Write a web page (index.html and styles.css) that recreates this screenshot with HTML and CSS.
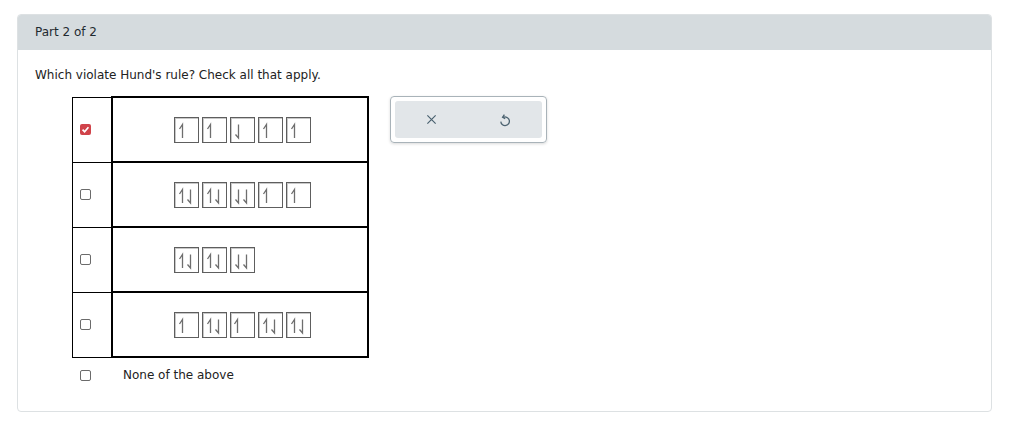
FILE: index.html
```html
<!DOCTYPE html>
<html>
<head lang="en">
    <meta charset="UTF-8">
    <title>Part 2 of 2</title>
    <link rel="stylesheet" href="styles.css">
</head>
<body>
    <div class="card">
        <div class="card-head">Part 2 of 2</div>
        <div class="card-body">
            <p class="question">Which violate Hund's rule? Check all that apply.</p>
            <div class="answer">
                <div class="choices">
                    <table class="grid">
                        <tr>
                            <td class="pick"><span class="box checked"><svg viewBox="0 0 12 12"><path d="M2.8 6.2l2.2 2.3 4.2-5"/></svg></span></td>
                            <td class="orbitals">
                                <span class="orb"><svg viewBox="0 0 23 24"><path d="M7.5 20V6.5l-3 4.5"/></svg></span>
                                <span class="orb"><svg viewBox="0 0 23 24"><path d="M7.5 20V6.5l-3 4.5"/></svg></span>
                                <span class="orb"><svg viewBox="0 0 23 24"><path d="M7.5 6.5V20l-3-3.5"/></svg></span>
                                <span class="orb"><svg viewBox="0 0 23 24"><path d="M7.5 20V6.5l-3 4.5"/></svg></span>
                                <span class="orb"><svg viewBox="0 0 23 24"><path d="M7.5 20V6.5l-3 4.5"/></svg></span>
                            </td>
                        </tr>
                        <tr>
                            <td class="pick"><span class="box"></span></td>
                            <td class="orbitals">
                                <span class="orb"><svg viewBox="0 0 23 24"><path d="M7.5 20V6.5l-3 4.5M15.5 6.5V20l-3-3.5"/></svg></span>
                                <span class="orb"><svg viewBox="0 0 23 24"><path d="M7.5 20V6.5l-3 4.5M15.5 6.5V20l-3-3.5"/></svg></span>
                                <span class="orb"><svg viewBox="0 0 23 24"><path d="M7.5 6.5V20l-3-3.5M15.5 6.5V20l-3-3.5"/></svg></span>
                                <span class="orb"><svg viewBox="0 0 23 24"><path d="M7.5 20V6.5l-3 4.5"/></svg></span>
                                <span class="orb"><svg viewBox="0 0 23 24"><path d="M7.5 20V6.5l-3 4.5"/></svg></span>
                            </td>
                        </tr>
                        <tr>
                            <td class="pick"><span class="box"></span></td>
                            <td class="orbitals">
                                <span class="orb"><svg viewBox="0 0 23 24"><path d="M7.5 20V6.5l-3 4.5M15.5 6.5V20l-3-3.5"/></svg></span>
                                <span class="orb"><svg viewBox="0 0 23 24"><path d="M7.5 20V6.5l-3 4.5M15.5 6.5V20l-3-3.5"/></svg></span>
                                <span class="orb"><svg viewBox="0 0 23 24"><path d="M7.5 6.5V20l-3-3.5M15.5 6.5V20l-3-3.5"/></svg></span>
                            </td>
                        </tr>
                        <tr>
                            <td class="pick"><span class="box"></span></td>
                            <td class="orbitals">
                                <span class="orb"><svg viewBox="0 0 23 24"><path d="M7.5 20V6.5l-3 4.5"/></svg></span>
                                <span class="orb"><svg viewBox="0 0 23 24"><path d="M7.5 20V6.5l-3 4.5M15.5 6.5V20l-3-3.5"/></svg></span>
                                <span class="orb"><svg viewBox="0 0 23 24"><path d="M6.5 20V6.5l-3 4.5"/></svg></span>
                                <span class="orb"><svg viewBox="0 0 23 24"><path d="M7.5 20V6.5l-3 4.5M15.5 6.5V20l-3-3.5"/></svg></span>
                                <span class="orb"><svg viewBox="0 0 23 24"><path d="M7.5 20V6.5l-3 4.5M15.5 6.5V20l-3-3.5"/></svg></span>
                            </td>
                        </tr>
                    </table>
                    <div class="none-row">
                        <span class="pick-plain"><span class="box"></span></span>
                        <span class="none-label">None of the above</span>
                    </div>
                </div>

                <div class="tools">
                    <div class="tools-inner">
                        <span class="tool"><svg class="icon-x" viewBox="0 0 12 12"><path d="M1.5 1.5l9 9M10.5 1.5l-9 9"/></svg></span>
                        <span class="tool"><svg class="icon-undo" viewBox="0 0 12 14"><path d="M4.2 4.4A4.3 4.3 0 1 1 1.8 8.6"/><path d="M5.4 1.6L3.6 4.3l2.6 1.3"/></svg></span>
                    </div>
                </div>
            </div>
        </div>
    </div>
</body>
</html>
```

FILE: styles.css
```css
body {
    margin: 0;
    background-color: #ffffff;
    font-family: "DejaVu Sans", Verdana, sans-serif;
    color: #222222;
}
.card {
    margin: 14px 32px 0 17px;
    height: 398px;
    box-sizing: border-box;
    border: 1px solid #dde1e3;
    border-radius: 4px;
    overflow: hidden;
}
.card-head {
    height: 35px;
    background-color: #d5dbde;
    padding-left: 17px;
    font-size: 12px;
    line-height: 35px;
    color: #1f2a30;
}
.card-body {
    padding: 0 17px;
}
.question {
    margin: 0;
    padding-top: 17px;
    height: 29px;
    font-size: 12px;
    line-height: 16px;
}
.answer {
    display: flex;
    align-items: flex-start;
    gap: 21px;
    padding-left: 37px;
}

/* table of orbital diagrams */
.grid {
    border-collapse: collapse;
    border: 1px solid #000000;
}
.grid td {
    height: 63px;
    padding: 0;
}
.pick {
    width: 31px;
    padding-left: 7px !important;
    text-align: left;
    font-size: 0;
    border-top: 1px solid #000000;
    border-bottom: 1px solid #000000;
    border-right: 1px solid #000000;
}
.orbitals {
    width: 193px;
    padding-left: 61px !important;
    border: 2px solid #000000;
    white-space: nowrap;
    font-size: 0;
}
.orb {
    display: inline-block;
    width: 23px;
    height: 24px;
    margin-right: 3px;
    border: 1px solid #5e5e5e;
    box-shadow: inset 1px 1px 0 #c8c8c8;
    vertical-align: middle;
}
.orb svg {
    display: block;
    width: 23px;
    height: 24px;
    fill: none;
    stroke: #6e6e6e;
    stroke-width: 1.3;
}

/* check boxes */
.box {
    display: inline-block;
    width: 9px;
    height: 9px;
    border: 1px solid #6b6b6b;
    border-radius: 2px;
    vertical-align: middle;
    background-color: #ffffff;
}
.box.checked {
    width: 11px;
    height: 11px;
    border: 0;
    background-color: #d0434a;
}
.box svg {
    display: block;
    width: 11px;
    height: 11px;
    fill: none;
    stroke: #ffffff;
    stroke-width: 1.8;
}
.none-row {
    display: flex;
    align-items: center;
    height: 34px;
}
.pick-plain {
    width: 43px;
    padding-left: 8px;
    box-sizing: border-box;
    font-size: 0;
}
.none-label {
    margin-left: 8px;
    font-size: 12px;
    color: #222222;
}

/* reset / undo panel */
.tools {
    width: 147px;
    padding: 4px;
    border: 1px solid #a9b3b9;
    border-radius: 4px;
    box-shadow: 0 1px 3px rgba(0, 0, 0, 0.15);
}
.tools-inner {
    display: flex;
    height: 37px;
    background-color: #e2e6e9;
    border-radius: 3px;
}
.tool {
    flex: 1;
    display: flex;
    align-items: center;
    justify-content: center;
}
.tool svg {
    fill: none;
    stroke: #4b6270;
    stroke-width: 1.3;
}
.icon-x {
    width: 11px;
    height: 11px;
}
.icon-undo {
    width: 12px;
    height: 14px;
}
```
